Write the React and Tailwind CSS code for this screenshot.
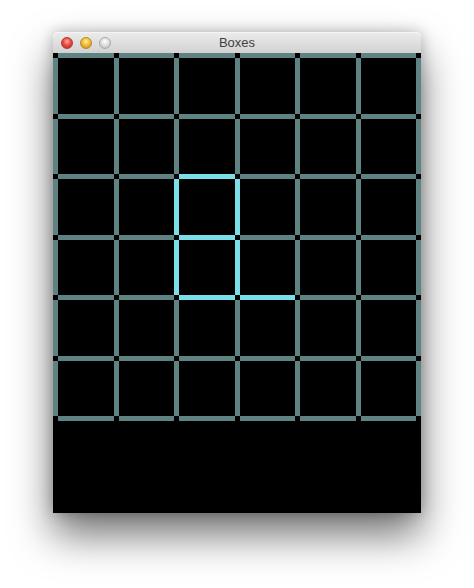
import React from "react"

const SIZE = 6
const GRAY = "bg-[#5f8383]"
const CYAN = "bg-[#7adfe8]"

// highlighted edges: "h-row-col" for horizontal lines, "v-col-row" for vertical lines
const lit = new Set(["h-2-2", "h-3-2", "h-4-2", "h-4-3", "v-2-2", "v-2-3", "v-3-2", "v-3-3"])

function Board() {
  const tiles = []
  for (let r = 0; r <= SIZE * 2; r++) {
    for (let c = 0; c <= SIZE * 2; c++) {
      const key = `${r}-${c}`
      if (r % 2 === 0 && c % 2 === 1) {
        const on = lit.has(`h-${r / 2}-${(c - 1) / 2}`)
        tiles.push(<div key={key} className={on ? CYAN : GRAY} />)
      } else if (r % 2 === 1 && c % 2 === 0) {
        const on = lit.has(`v-${c / 2}-${(r - 1) / 2}`)
        tiles.push(<div key={key} className={on ? CYAN : GRAY} />)
      } else {
        tiles.push(<div key={key} className="bg-black" />)
      }
    }
  }

  return (
    <div className="grid grid-cols-[5px_55.5px_5px_55.5px_5px_55.5px_5px_55.5px_5px_55.5px_5px_55.5px_5px] grid-rows-[5px_55.5px_5px_55.5px_5px_55.5px_5px_55.5px_5px_55.5px_5px_55.5px_5px]">
      {tiles}
    </div>
  )
}

export default function App() {
  return (
    <div className="min-h-[588px] bg-white pt-[32px] pl-[53px]">
      <div className="w-[368px] rounded-t-[5px] shadow-[0_22px_40px_rgba(0,0,0,0.55),0_0_14px_rgba(0,0,0,0.25)]">

        {/* TITLE BAR */}
        <div className="relative h-[21px] rounded-t-[5px] border-t border-[#f4f4f4] bg-gradient-to-b from-[#ebebeb] to-[#d2d2d2] flex items-center">
          <div className="flex items-center gap-[7px] pl-[8px]">
            <span className="w-[12px] h-[12px] rounded-full border border-[#b03a32] bg-[radial-gradient(circle_at_50%_35%,#ffb0a8_0%,#ec4a3f_45%,#b72a22_100%)]" />
            <span className="w-[12px] h-[12px] rounded-full border border-[#b48a22] bg-[radial-gradient(circle_at_50%_35%,#fff0a8_0%,#f2bc3a_45%,#c08a16_100%)]" />
            <span className="w-[12px] h-[12px] rounded-full border border-[#a8a8a8] bg-[radial-gradient(circle_at_50%_35%,#ffffff_0%,#dcdcdc_50%,#b4b4b4_100%)]" />
          </div>
          <span className="absolute inset-x-0 text-center text-[13px] leading-[20px] text-[#404040] font-['Liberation_Sans',Arial,sans-serif]">
            Boxes
          </span>
        </div>

        {/* CONTENT */}
        <div className="h-[460px] bg-black">
          <Board />
        </div>

      </div>
    </div>
  )
}
